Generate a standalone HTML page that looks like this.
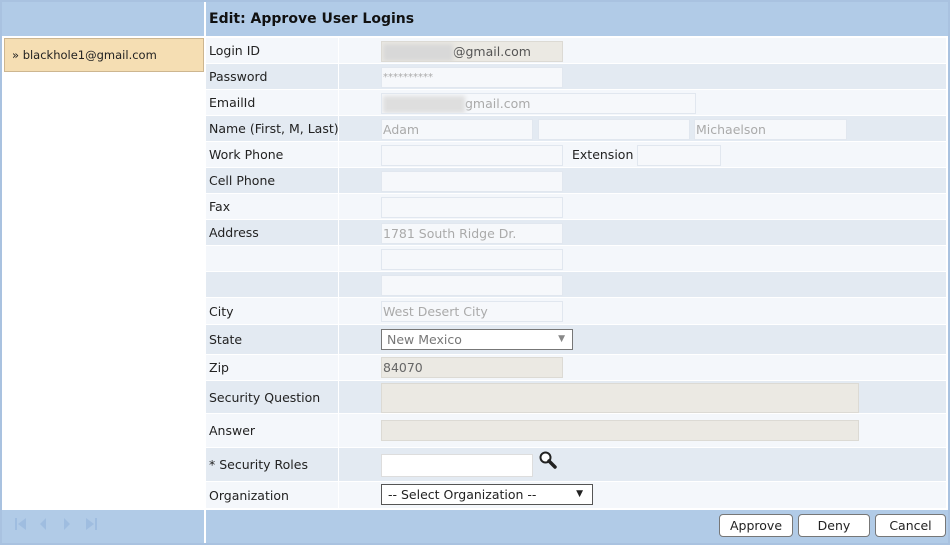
<!DOCTYPE html>
<html><head><meta charset="utf-8"><style>
*{box-sizing:border-box;margin:0;padding:0}
body{width:950px;height:545px;background:#fff;font-family:"DejaVu Sans","Liberation Sans",sans-serif;font-size:12.5px;color:#222;position:relative;overflow:hidden}
.a{position:absolute}
.row{position:absolute;left:206px;width:740px}
.lab{position:absolute;left:3px;top:0;height:100%;display:flex;align-items:center;white-space:nowrap}
.sep{position:absolute;left:132px;top:0;width:1px;height:100%;background:#fff}
.in{position:absolute;height:21px;border:1px solid #e1e7ef;background:#f6f8fb;color:#aaa;font-size:12.5px;padding-left:1px;line-height:19px;white-space:nowrap;overflow:hidden}
.ro{background:#ebe9e3;border-color:#dcdad4;color:#666}
.btn{position:absolute;top:514px;height:23px;border:1px solid #777;border-radius:4px;background:#fff;font-size:12.5px;text-align:center;line-height:21px;color:#222}
</style></head><body>
<div class="a" style="left:0;top:0;width:950px;height:545px;border:2px solid #a9c2e0"></div>
<div class="a" style="left:2px;top:2px;width:946px;height:34px;background:#b1cbe7"></div>
<div class="a" style="left:204px;top:2px;width:2px;height:541px;background:#fff"></div>
<div class="a" style="left:209px;top:2px;height:34px;line-height:34px;font-weight:bold;font-size:14px;color:#111">Edit: Approve User Logins</div>
<div class="a" style="left:4px;top:38px;width:200px;height:34px;background:#f5deb3;border:1px solid #cdb690;line-height:32px;padding-left:7px;font-size:11.5px">» blackhole1@gmail.com</div>

<div class="row" style="top:38px;height:25px;background:#f4f7fb"><div class="lab">Login ID</div><div class="sep"></div></div>
<div class="row" style="top:64px;height:25px;background:#e3eaf2"><div class="lab">Password</div><div class="sep"></div></div>
<div class="row" style="top:90px;height:25px;background:#f4f7fb"><div class="lab">EmailId</div><div class="sep"></div></div>
<div class="row" style="top:116px;height:25px;background:#e3eaf2"><div class="lab">Name (First, M, Last)</div><div class="sep"></div></div>
<div class="row" style="top:142px;height:25px;background:#f4f7fb"><div class="lab">Work Phone</div><div class="sep"></div></div>
<div class="row" style="top:168px;height:25px;background:#e3eaf2"><div class="lab">Cell Phone</div><div class="sep"></div></div>
<div class="row" style="top:194px;height:25px;background:#f4f7fb"><div class="lab">Fax</div><div class="sep"></div></div>
<div class="row" style="top:220px;height:25px;background:#e3eaf2"><div class="lab">Address</div><div class="sep"></div></div>
<div class="row" style="top:246px;height:25px;background:#f4f7fb"><div class="sep"></div></div>
<div class="row" style="top:272px;height:25px;background:#e3eaf2"><div class="sep"></div></div>
<div class="row" style="top:298px;height:26px;background:#f4f7fb"><div class="lab">City</div><div class="sep"></div></div>
<div class="row" style="top:325px;height:29px;background:#e3eaf2"><div class="lab">State</div><div class="sep"></div></div>
<div class="row" style="top:355px;height:25px;background:#f4f7fb"><div class="lab">Zip</div><div class="sep"></div></div>
<div class="row" style="top:381px;height:32px;background:#e3eaf2"><div class="lab">Security Question</div><div class="sep"></div></div>
<div class="row" style="top:414px;height:33px;background:#f4f7fb"><div class="lab">Answer</div><div class="sep"></div></div>
<div class="row" style="top:448px;height:33px;background:#e3eaf2"><div class="lab">* Security Roles</div><div class="sep"></div></div>
<div class="row" style="top:482px;height:26px;background:#f4f7fb"><div class="lab">Organization</div><div class="sep"></div></div>

<div class="in ro" style="left:381px;top:41px;width:182px;color:#555"><span style="display:inline-block;width:70px;height:17px;background:#d8d8d8;vertical-align:middle;filter:blur(2px)"></span>@gmail.com</div>
<div class="in" style="left:381px;top:67px;width:182px;font-size:10px;color:#aaa">**********</div>
<div class="in" style="left:381px;top:93px;width:315px"><span style="display:inline-block;width:82px;height:17px;background:#dedede;vertical-align:middle;filter:blur(2px)"></span>gmail.com</div>
<div class="in" style="left:381px;top:119px;width:152px">Adam</div>
<div class="in" style="left:538px;top:119px;width:152px"></div>
<div class="in" style="left:694px;top:119px;width:153px">Michaelson</div>
<div class="in" style="left:381px;top:145px;width:182px"></div>
<div class="a" style="left:572px;top:142px;height:26px;line-height:26px">Extension</div>
<div class="in" style="left:637px;top:145px;width:84px"></div>
<div class="in" style="left:381px;top:171px;width:182px"></div>
<div class="in" style="left:381px;top:197px;width:182px"></div>
<div class="in" style="left:381px;top:223px;width:182px">1781 South Ridge Dr.</div>
<div class="in" style="left:381px;top:249px;width:182px"></div>
<div class="in" style="left:381px;top:275px;width:182px"></div>
<div class="in" style="left:381px;top:301px;width:182px">West Desert City</div>
<div class="in" style="left:381px;top:329px;width:192px;background:#fff;border-color:#777;color:#777;padding-left:5px">New Mexico<span style="position:absolute;right:7px;font-size:9px;color:#888">▼</span></div>
<div class="in ro" style="left:381px;top:357px;width:182px">84070</div>
<div class="in ro" style="left:381px;top:383px;width:478px;height:30px"></div>
<div class="in ro" style="left:381px;top:420px;width:478px;height:21px"></div>
<div class="in" style="left:381px;top:454px;width:152px;height:23px;background:#fff;border-color:#ddd"></div>
<svg class="a" style="left:538px;top:450px" width="20" height="20" viewBox="0 0 20 20"><circle cx="7.5" cy="7.5" r="5" fill="#fff" stroke="#222" stroke-width="2"/><path d="M11 11 L17 17" stroke="#222" stroke-width="3.5" stroke-linecap="round"/></svg>
<div class="in" style="left:381px;top:484px;width:212px;height:21px;background:#fff;border-color:#555;color:#222;padding-left:6px">-- Select Organization --<span style="position:absolute;right:9px;font-size:9px">▼</span></div>

<div class="a" style="left:2px;top:510px;width:946px;height:33px;background:#b1cbe7"></div>
<div class="a" style="left:204px;top:510px;width:2px;height:33px;background:#fff"></div>
<svg class="a" style="left:14px;top:517px" width="90" height="14" viewBox="0 0 90 14" fill="#9fbde0"><rect x="1" y="1" width="2" height="12"/><path d="M12 1 L4 7 L12 13Z"/><path d="M32 1 L26 7 L32 13Z"/><path d="M50 1 L56 7 L50 13Z"/><path d="M72 1 L80 7 L72 13Z"/><rect x="81" y="1" width="2" height="12"/></svg>
<div class="btn" style="left:719px;width:74px">Approve</div>
<div class="btn" style="left:798px;width:72px">Deny</div>
<div class="btn" style="left:875px;width:71px">Cancel</div>
</body></html>
